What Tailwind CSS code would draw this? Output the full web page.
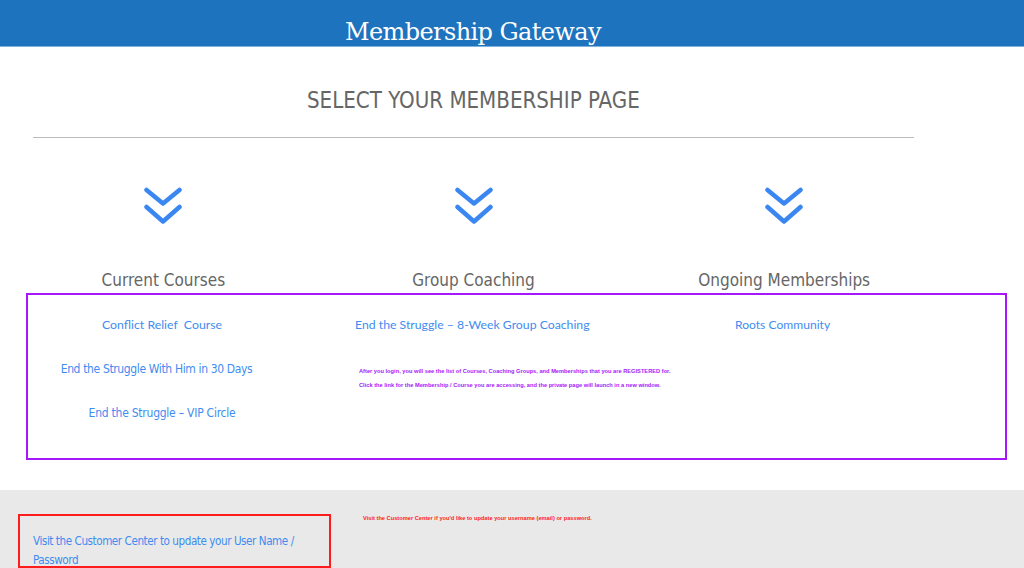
<!DOCTYPE html>
<html lang="en">
<head>
<meta charset="utf-8">
<title>Membership Gateway</title>
<script src="https://cdn.jsdelivr.net/npm/@tailwindcss/browser@4"></script>
</head>
<body class="bg-white h-[568px] overflow-hidden font-['DejaVu_Sans',sans-serif]">
<header class="h-[47px] bg-[#1d73be] border-b border-[#7fb2de] pl-[345px] pt-[16px]">
  <h1 class="font-['DejaVu_Serif',serif] text-white text-[24px] leading-[32px] tracking-[-0.6px] whitespace-nowrap">Membership Gateway</h1>
</header>
<main class="h-[443px] flex flex-col">
  <h2 class="mt-[39px] ml-[307px] text-[#666] text-[22.1px] leading-[28px] font-['DejaVu_Sans_Condensed','DejaVu_Sans',sans-serif] whitespace-nowrap">SELECT YOUR MEMBERSHIP PAGE</h2>
  <hr class="mt-[23px] ml-[33px] w-[881px] border-t border-[#bbb]">
  <div class="ml-[8px] w-[932px] grid grid-cols-3 mt-[49px] text-center">
    <div class="flex justify-center"><svg class="w-[38px] h-[38px]" viewBox="0 0 38 38" fill="none" stroke="#3b87f2" stroke-width="4.5" stroke-linecap="round" stroke-linejoin="round"><path d="M2.5 3l16.5 13.5L35.5 3M2.5 20l16.5 14.5L35.5 20"/></svg></div>
    <div class="flex justify-center"><svg class="w-[38px] h-[38px]" viewBox="0 0 38 38" fill="none" stroke="#3b87f2" stroke-width="4.5" stroke-linecap="round" stroke-linejoin="round"><path d="M2.5 3l16.5 13.5L35.5 3M2.5 20l16.5 14.5L35.5 20"/></svg></div>
    <div class="flex justify-center pr-[1px]"><svg class="w-[38px] h-[38px]" viewBox="0 0 38 38" fill="none" stroke="#3b87f2" stroke-width="4.5" stroke-linecap="round" stroke-linejoin="round"><path d="M2.5 3l16.5 13.5L35.5 3M2.5 20l16.5 14.5L35.5 20"/></svg></div>
  </div>
  <div class="ml-[8px] w-[932px] grid grid-cols-3 mt-[43px] text-center text-[#666] text-[17px] leading-[24px] font-['DejaVu_Sans_Condensed','DejaVu_Sans',sans-serif]">
    <h3>Current Courses</h3>
    <h3 class="pr-[1px]">Group Coaching</h3>
    <h3 class="pr-[1px]">Ongoing Memberships</h3>
  </div>
  <section class="mt-[1px] ml-[26px] w-[981px] h-[167px] border-2 border-[#a717fb] grid grid-cols-[268px_404px_1fr] text-[#3f8cf0] text-[12px] leading-[20px]">
    <div class="flex flex-col items-center pt-[20px] font-['DejaVu_Sans_Condensed',sans-serif]">
      <a class="font-['Lato',sans-serif] text-[12.3px]">Conflict Relief&nbsp; Course</a>
      <a class="mt-[24px] pr-[11px] tracking-[-0.36px]">End the Struggle With Him in 30 Days</a>
      <a class="mt-[24px] tracking-[-0.24px]">End the Struggle – VIP Circle</a>
    </div>
    <div class="pt-[20px] pl-[59px]">
      <a class="font-['Lato',sans-serif] text-[12.25px] whitespace-nowrap">End the Struggle – 8-Week Group Coaching</a>
      <div class="mt-[32px] pl-[4px] font-['Liberation_Sans',sans-serif] font-bold text-[#a717fb] text-[5.7px] leading-[9px] whitespace-nowrap">
        <p>After you login, you will see the list of Courses, Coaching Groups, and Memberships that you are REGISTERED for.</p>
        <p class="mt-[5px]">Click the link for the Membership / Course you are accessing, and the private page will launch in a new window.</p>
      </div>
    </div>
    <div class="pt-[20px] pl-[35px]">
      <a class="font-['Lato',sans-serif] text-[12.1px]">Roots Community</a>
    </div>
  </section>
</main>
<footer class="h-[78px] bg-[#e9e9e9] pt-[25px] pl-[18px] flex items-start">
  <div class="w-[313px] h-[54px] -mt-[1px] shrink-0 border-2 border-[#ff1c1c] pt-[16px] pl-[13px] pr-[12px] text-[#3f8cf0] text-[11.6px] tracking-[-0.44px] leading-[19px] font-['DejaVu_Sans_Condensed',sans-serif] overflow-hidden">
    <a>Visit the Customer Center to update your User Name / Password</a>
  </div>
  <p class="ml-[32px] font-['Liberation_Sans',sans-serif] font-bold text-[#ff1c1c] text-[5.7px] leading-[7px] whitespace-nowrap">Visit the Customer Center if you'd like to update your username (email) or password.</p>
</footer>
</body>
</html>
